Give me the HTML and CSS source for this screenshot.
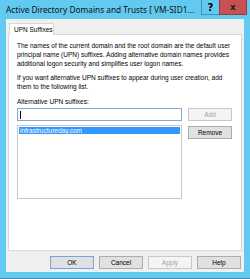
FILE: index.html
```html
<!DOCTYPE html>
<html lang="en">
<head>
  <meta charset="UTF-8">
  <title>Active Directory Domains and Trusts</title>
  <link rel="stylesheet" href="styles.css">
</head>
<body>

  <div class="window">
    <!-- TITLE BAR -->
    <div class="titlebar">
      <span class="title">Active Directory Domains and Trusts [ VM-SID1...</span>
      <div class="caption-buttons">
        <span class="caption-help">?</span>
        <span class="caption-close">x</span>
      </div>
    </div>

    <!-- CLIENT AREA -->
    <div class="client">
      <div class="tabs">
        <div class="tab">UPN Suffixes</div>
      </div>

      <div class="panel">
        <p>The names of the current domain and the root domain are the default user principal name (UPN) suffixes. Adding alternative domain names provides additional logon security and simplifies user logon names.</p>
        <p>If you want alternative UPN suffixes to appear during user creation, add them to the following list.</p>

        <label class="field-label">Alternative UPN suffixes:</label>
        <div class="row">
          <div class="textbox"><span class="caret"></span></div>
          <button class="btn" disabled>Add</button>
        </div>
        <div class="row">
          <div class="listbox">
            <div class="list-item selected">infrastructureday.com</div>
          </div>
          <button class="btn">Remove</button>
        </div>
      </div>

      <div class="footer">
        <button class="btn default">OK</button>
        <button class="btn">Cancel</button>
        <button class="btn" disabled>Apply</button>
        <button class="btn">Help</button>
      </div>
    </div>
  </div>

</body>
</html>
```

FILE: styles.css
```css
body {
  margin: 0;
  background: #62c9f0;
  font-family: 'Liberation Sans', Arial, sans-serif;
  color: #000;
  overflow: hidden;
}
.window {
  width: 250px;
  height: 279px;
  background: #62c9f0;
  border-bottom: 1px solid #4a8db0;
  box-sizing: border-box;
  display: flex;
  flex-direction: column;
  overflow: hidden;
}
.titlebar {
  height: 19px;
  display: flex;
  align-items: flex-start;
}
.title {
  flex: 1;
  min-width: 0;
  font-family: 'Noto Sans', sans-serif;
  font-size: 8.3px;
  line-height: 19px;
  padding-left: 6px;
  color: #111;
  white-space: nowrap;
}
.caption-buttons {
  display: flex;
  margin-right: 3px;
}
.caption-help,
.caption-close {
  height: 15px;
  display: flex;
  align-items: center;
  justify-content: center;
  font-family: 'DejaVu Sans', sans-serif;
  font-weight: bold;
  box-sizing: border-box;
}
.caption-help {
  width: 18px;
  font-size: 10px;
  color: #000;
  border: 1px solid #3f8fb8;
  border-top: none;
  border-right: none;
}
.caption-close {
  width: 28px;
  font-size: 9px;
  color: #222;
  background: #c75050;
  border: 1px solid #9c3a3a;
  border-top: none;
}
.client {
  flex: 1;
  margin: 0 6px 6px 6px;
  padding: 4px 2px 0 2px;
  background: #f0f0f0;
  display: flex;
  flex-direction: column;
}
.tabs {
  display: flex;
  padding-left: 1px;
  margin-bottom: -1px;
  position: relative;
}
.tab {
  width: 45px;
  height: 12px;
  box-sizing: border-box;
  background: #fff;
  border: 1px solid #d9d9d9;
  border-bottom: none;
  font-size: 6.5px;
  line-height: 11px;
  padding-left: 4px;
  white-space: nowrap;
}
.panel {
  height: 217px;
  box-sizing: border-box;
  background: #fff;
  border: 1px solid #d9d9d9;
  padding: 7px 9px 0 8px;
  font-size: 6.5px;
  line-height: 8.8px;
}
.panel p {
  margin: 0 0 6px 0;
}
.field-label {
  display: block;
  margin-top: 4px;
}
.row {
  display: flex;
  align-items: flex-start;
  gap: 6px;
}
.textbox {
  width: 165px;
  height: 13px;
  box-sizing: border-box;
  border: 1px solid #7eaad4;
  margin-top: 1px;
  padding: 2px 0 0 2px;
}
.caret {
  display: block;
  width: 1px;
  height: 8px;
  background: #000;
}
.listbox {
  width: 165px;
  height: 74px;
  box-sizing: border-box;
  border: 1px solid #c7c7c7;
  margin-top: 4px;
  padding: 1px;
}
.list-item {
  height: 7px;
  line-height: 7px;
  padding-left: 1px;
}
.list-item.selected {
  background: #3399ff;
  color: #fff;
}
.btn {
  width: 44px;
  height: 13px;
  box-sizing: border-box;
  margin: 1px 0 0 0;
  padding: 0;
  background: #e1e1e1;
  border: 1px solid #adadad;
  font-family: 'Liberation Sans', Arial, sans-serif;
  font-size: 6.5px;
  color: #000;
}
.row .listbox + .btn {
  margin-top: 5px;
}
.btn:disabled {
  background: #f4f4f4;
  border-color: #c8c8c8;
  color: #a3a3a3;
}
.btn.default {
  border-color: #6fa8dc;
}
.footer {
  display: flex;
  justify-content: flex-end;
  gap: 5px;
  margin-top: 4px;
  padding-right: 1px;
}
```
